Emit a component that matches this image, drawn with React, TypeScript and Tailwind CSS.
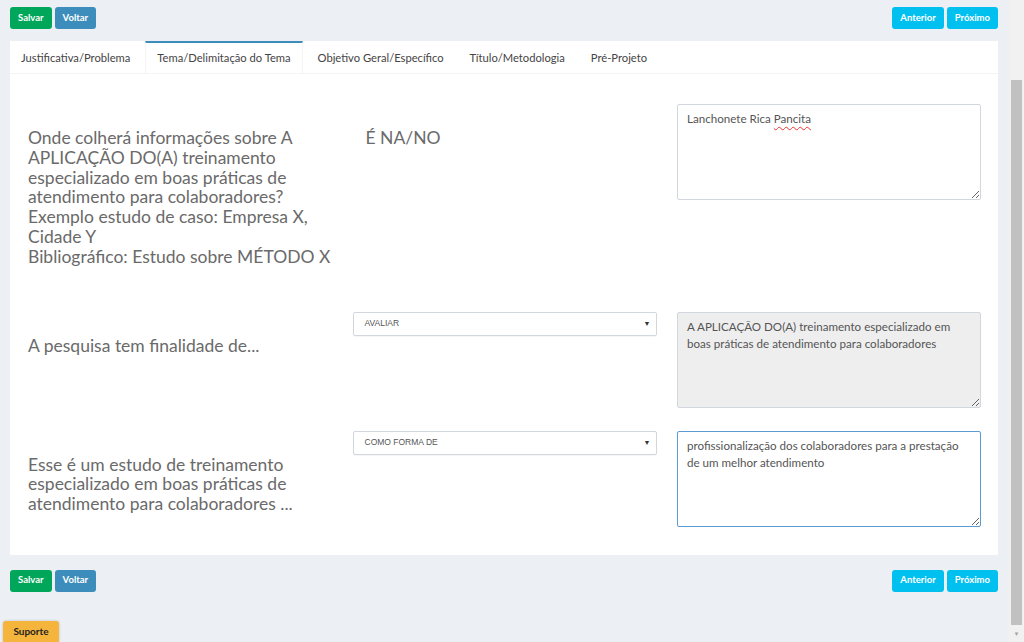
import React from "react"

const font = { fontFamily: "Lato, 'Noto Sans', sans-serif" }

const tabs = [
  "Justificativa/Problema",
  "Tema/Delimitação do Tema",
  "Objetivo Geral/Específico",
  "Título/Metodologia",
  "Pré-Projeto",
]

function Btn({ label, color }: { label: string; color: string }) {
  return (
    <button className={`h-[22px] rounded-[3px] px-[8px] text-[9.5px] font-bold text-white ${color}`}>
      {label}
    </button>
  )
}

function ActionBar() {
  return (
    <div className="flex items-center justify-between">
      <div className="flex gap-[3px]">
        <Btn label="Salvar" color="bg-[#00a65a]" />
        <Btn label="Voltar" color="bg-[#3c8dbc]" />
      </div>
      <div className="flex gap-[3px]">
        <Btn label="Anterior" color="bg-[#00c0ef]" />
        <Btn label="Próximo" color="bg-[#00c0ef]" />
      </div>
    </div>
  )
}

function Select({ value }: { value: string }) {
  return (
    <div className="flex h-[24px] items-center justify-between rounded-[2px] border border-[#d2d6de] bg-white pl-[11px] pr-[5px] shadow-[0_1px_1px_rgba(0,0,0,0.04)]">
      <span className="text-[8.5px] uppercase text-[#555]" style={{ fontFamily: "'Liberation Sans', Arial, sans-serif" }}>
        {value}
      </span>
      <span className="text-[7px] text-[#333]">▼</span>
    </div>
  )
}

function Area({
  children,
  variant = "normal",
}: {
  children: React.ReactNode
  variant?: "normal" | "disabled" | "focus"
}) {
  const cls =
    variant === "disabled"
      ? "bg-[#eeeeee] border-[#d2d6de]"
      : variant === "focus"
        ? "bg-white border-[#5b9bd1]"
        : "bg-white border-[#d2d6de]"
  return (
    <div
      className={`h-[96px] resize overflow-auto rounded-[2px] border px-[9px] pt-[5px] text-[11.6px] leading-[17px] text-[#555] ${cls}`}
    >
      {children}
    </div>
  )
}

function Label({ lines }: { lines: string[] }) {
  return (
    <p className="pt-[24px] text-[17.5px] leading-[19.8px] text-[#6a6a6a]">
      {lines.map((l, i) => (
        <span key={i} className="block whitespace-nowrap">
          {l}
        </span>
      ))}
    </p>
  )
}

export default function App() {
  return (
    <div className="relative flex h-[642px] w-[1024px] overflow-hidden bg-[#ecf0f5]" style={font}>
      <div className="flex-1 pl-[10px] pr-[11px] pt-[7px]">
        <ActionBar />

        {/* Card */}
        <div className="mt-[12px] bg-white">
          {/* Tabs */}
          <div className="flex h-[33px] border-b border-[#f4f4f4]">
            {tabs.map((t, i) => (
              <div
                key={t}
                className={`mr-[4px] flex items-center px-[11px] text-[11.2px] ${
                  i === 1
                    ? "border-x border-t-2 border-x-[#f4f4f4] border-t-[#3c8dbc] text-[#444]"
                    : "border-t-2 border-t-transparent text-[#444]"
                }`}
              >
                {t}
              </div>
            ))}
          </div>

          {/* Rows */}
          <div className="flex flex-col gap-[23px] pb-[28px] pl-[18px] pr-[17px] pt-[30px]">
            <div className="grid grid-cols-3 items-start gap-x-[20.5px]">
              <div className="pb-[22px]">
                <Label
                  lines={[
                    "Onde colherá informações sobre A",
                    "APLICAÇÃO DO(A) treinamento",
                    "especializado em boas práticas de",
                    "atendimento para colaboradores?",
                    "Exemplo estudo de caso: Empresa X,",
                    "Cidade Y",
                    "Bibliográfico: Estudo sobre MÉTODO X",
                  ]}
                />
              </div>
              <div className="pl-[13px]">
                <Label lines={["É NA/NO"]} />
              </div>
              <Area>
                Lanchonete Rica{" "}
                <span className="underline decoration-[#e33] decoration-wavy decoration-[1px] underline-offset-[3px]">
                  Pancita
                </span>
              </Area>
            </div>

            <div className="grid grid-cols-3 items-start gap-x-[20.5px]">
              <Label lines={["A pesquisa tem finalidade de..."]} />
              <Select value="Avaliar" />
              <Area variant="disabled">
                A APLICAÇÃO DO(A) treinamento especializado em boas práticas de atendimento para colaboradores
              </Area>
            </div>

            <div className="grid grid-cols-3 items-start gap-x-[20.5px]">
              <Label
                lines={[
                  "Esse é um estudo de treinamento",
                  "especializado em boas práticas de",
                  "atendimento para colaboradores ...",
                ]}
              />
              <Select value="Como forma de" />
              <Area variant="focus">
                profissionalização dos colaboradores para a prestação de um melhor atendimento
              </Area>
            </div>
          </div>
        </div>

        <div className="mt-[15px]">
          <ActionBar />
        </div>
      </div>

      {/* Scrollbar */}
      <div className="flex w-[15px] flex-col bg-[#f1f1f1]">
        <div className="mx-[2px] mt-[80px] h-[545px] bg-[#c1c1c1]" />
        <div className="flex flex-1 items-center justify-center text-[6px] text-[#a3a3a3]">▼</div>
      </div>

      {/* Suporte */}
      <button className="absolute bottom-0 left-[3px] h-[21px] w-[56px] rounded-t-[3px] bg-[#f5b43c] text-[10px] font-bold text-[#222] shadow-[0_0_3px_rgba(0,0,0,0.2)]">
        Suporte
      </button>
    </div>
  )
}
